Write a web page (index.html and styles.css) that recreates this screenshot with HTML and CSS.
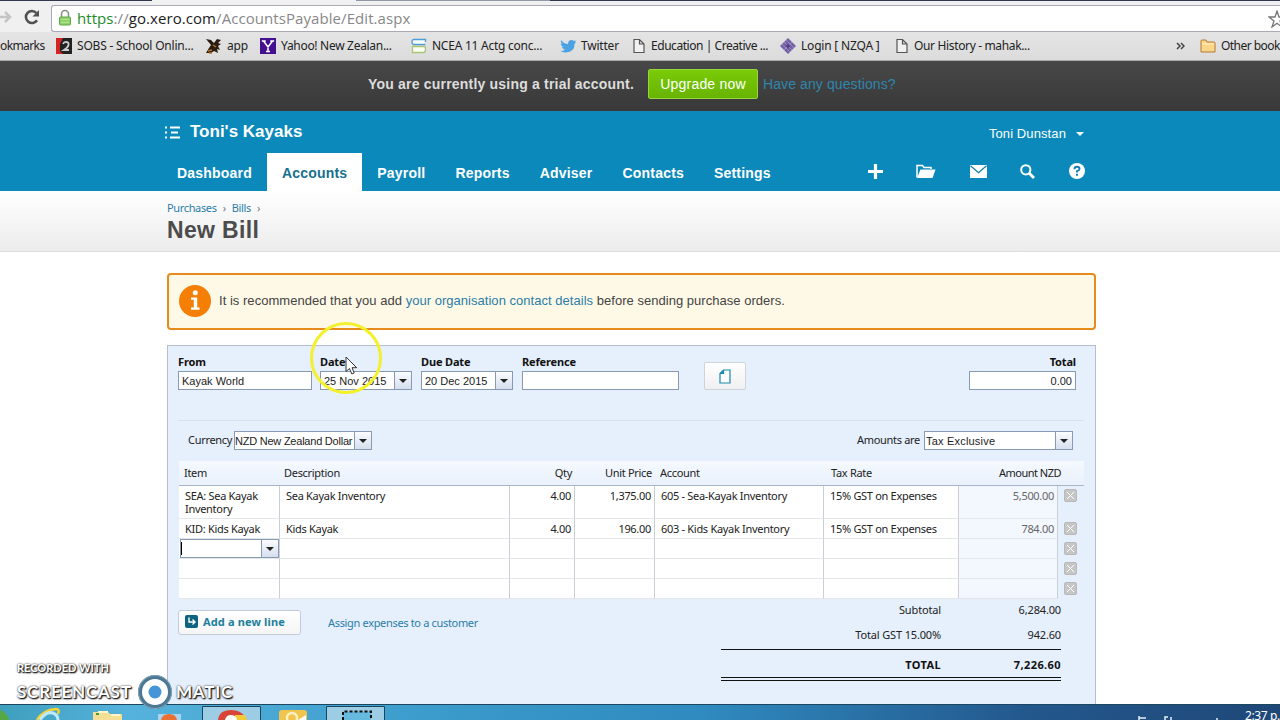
FILE: index.html
```html
<!DOCTYPE html>
<html lang="en">
<head>
    <meta charset="UTF-8">
    <meta name="viewport" content="width=device-width, initial-scale=1.0">
    <title>New Bill</title>
    <link rel="stylesheet" href="styles.css">
</head>
<body>

    <!-- Browser -->
    <div class="tab-strip"><span class="tab"></span><span class="new-tab"></span></div>
    <div class="toolbar">
        <svg class="forward" width="14" height="20" viewBox="0 0 14 20"><path d="M-2 10H8M5 5l5 5-5 5" fill="none" stroke="#c4c4c4" stroke-width="2.500"/></svg>
        <svg class="reload" width="18" height="18" viewBox="0 0 18 18"><path d="M14 12.200A6 6 0 1 1 13.400 5" fill="none" stroke="#505050" stroke-width="2.600"/><path d="M16 2v6.500H9.500z" fill="#505050"/></svg>
        <div class="omnibox">
            <svg width="14" height="18" viewBox="0 0 14 18"><path d="M3.500 9V5a3.500 3.500 0 0 1 7 0v4" fill="none" stroke="#8a9285" stroke-width="1.600"/><rect x="1.500" y="8" width="11" height="8" rx="1" fill="#8fd26a" stroke="#5fa947"/><path d="M3 10.500h8M3 13.500h8" stroke="#b3e496"/></svg>
            <span class="url"><span class="secure">https</span>://<span class="host">go.xero.com</span>/AccountsPayable/Edit.aspx</span>
        </div>
        <svg class="star" width="18" height="18" viewBox="0 0 18 18"><path d="M9 1l2 6h6l-5 4 2 6-5-3.700L4 17l2-6-5-4h6z" fill="#fff" stroke="#777" stroke-width="1.300"/></svg>
    </div>
    <div class="bookmarks">
        <span class="bm bm-first">okmarks</span>
        <svg class="i-sobs" width="16" height="16" viewBox="0 0 16 16"><path d="M0 0h16v16H0z" fill="#222"/><path d="M0 0h7L4 6v7l3 3H0z" fill="#d32424"/><path d="M7 6q1-2.500 3.500-2T12.500 7 8 12h5" fill="none" stroke="#ccc" stroke-width="1.800"/></svg>
        <span class="bm bm-sobs">SOBS - School Onlin...</span>
        <svg class="i-app" width="16" height="16" viewBox="0 0 16 16"><path d="M0 1l5 1 3 3 3-4 4 1-3 3 3 1-3 2 2 4-3-1 1 4-4-2-3 2H0l3-5 2-3z" fill="#2b1c12"/><path d="M7 7l3 2M2 13l4-1M3 15h3" stroke="#b77325" stroke-width="1.500"/></svg>
        <span class="bm bm-app">app</span>
        <svg class="i-yahoo" width="16" height="16" viewBox="0 0 16 16"><path d="M0 0h16v16H0z" fill="#45108f"/><path d="M3.500 3L8 9l4.500-6M8 8v6M1.800 3h4M10.200 3h4M6 13.500h4" fill="none" stroke="#fff" stroke-width="1.500"/></svg>
        <span class="bm bm-yahoo">Yahoo! New Zealan...</span>
        <svg class="i-ncea" width="16" height="16" viewBox="0 0 16 16"><path d="M14.500 4V1.500H3q-2 0-2 2.500t2 2.500h11.500" fill="#fff" stroke="#4e9bd5" stroke-width="1.300"/><path d="M1 8.500h12q1.500 0 1.500 2.800T13 14.500H1.500V9" fill="#fbfcf4" stroke="#a9c576" stroke-width="1.300"/></svg>
        <span class="bm bm-ncea">NCEA 11 Actg conc...</span>
        <svg class="i-twitter" width="16" height="16" viewBox="0 0 16 16"><path d="M1 2q3 4 7 4 0-4 3.500-4 1.500 0 2.500 1l2-.5-1 2 1-.2-1.500 1.700Q14.500 14 6 14.500q-3 0-5.500-1.500 3 0 4.500-1.500-2.500-.5-3-2.500h1.500Q.8 8 .8 5.500l1.500.5Q0 4 1 2z" fill="#4ba3e3"/></svg>
        <span class="bm bm-twitter">Twitter</span>
        <svg class="i-page" width="12" height="16" viewBox="0 0 12 16"><path d="M1 1.500h5.500L11 6v8.500H1zM6.500 1.500V6H11" fill="#f0f0f0" stroke="#555" stroke-width="1.200"/></svg>
        <span class="bm bm-edu">Education | Creative ...</span>
        <svg class="i-nzqa" width="16" height="16" viewBox="0 0 16 16"><path d="M8 0l8 8-8 8-8-8z" fill="#7461a6"/><path d="M4 4l8 8M12 4l-8 8M6 2l8 8M2 6l8 8" stroke="#a496c4" stroke-width=".8"/><path d="M8 5.500L10.500 8 8 10.500 5.500 8z" fill="#57418b"/></svg>
        <span class="bm bm-nzqa">Login [ NZQA ]</span>
        <svg class="i-page" width="12" height="16" viewBox="0 0 12 16"><path d="M1 1.500h5.500L11 6v8.500H1zM6.500 1.500V6H11" fill="#f0f0f0" stroke="#555" stroke-width="1.200"/></svg>
        <span class="bm bm-history">Our History - mahak...</span>
        <svg class="more" width="9" height="8" viewBox="0 0 9 8"><path d="M1 1l3 3-3 3M5 1l3 3-3 3" fill="none" stroke="#444" stroke-width="1.500"/></svg>
        <svg class="i-folder" width="16" height="14" viewBox="0 0 16 14"><path d="M1 13V2q0-1 1-1h4l1 2h7q1 0 1 1v9z" fill="#fbd58a" stroke="#b67b35"/><path d="M2 5h12" stroke="#fff0c0"/></svg>
        <span class="bm bm-other">Other book</span>
    </div>

    <!-- Trial bar -->
    <div class="trial">
        <strong>You are currently using a trial account.</strong>
        <a class="upgrade" href="#">Upgrade now</a>
        <a class="questions" href="#">Have any questions?</a>
    </div>

    <!-- Header -->
    <header>
        <div class="org-row">
            <svg width="15" height="13" viewBox="0 0 15 13"><path d="M0 1.500h2M5 1.500h10M0 6.500h2M6 6.500h7M0 11.500h2M5 11.500h10" stroke="#fff" stroke-width="1.800"/></svg>
            <span class="org">Toni's Kayaks</span>
            <span class="user">Toni Dunstan</span>
            <span class="user-caret"></span>
        </div>
        <nav>
            <a href="#">Dashboard</a>
            <a class="active" href="#">Accounts</a>
            <a href="#">Payroll</a>
            <a href="#">Reports</a>
            <a href="#">Adviser</a>
            <a href="#">Contacts</a>
            <a href="#">Settings</a>
            <div class="nav-icons">
                <svg width="15" height="15" viewBox="0 0 15 15"><path d="M7.500 0v15M0 7.500h15" stroke="#fff" stroke-width="3.200"/></svg>
                <svg width="20" height="15" viewBox="0 0 20 15"><path d="M1 13.500V1.500h5.500l1.500 2h7V5" fill="none" stroke="#fff" stroke-width="1.500"/><path d="M4.500 5.500H19.500l-3 8.500H1z" fill="#fff"/></svg>
                <svg width="17" height="13" viewBox="0 0 17 13"><path d="M0 0h17v13H0z" fill="#fff"/><path d="M.5 .8l8 7 8-7" fill="none" stroke="#0d7eae" stroke-width="1.200"/></svg>
                <svg width="15" height="15" viewBox="0 0 15 15"><circle cx="5.800" cy="5.800" r="4.600" fill="none" stroke="#fff" stroke-width="2"/><path d="M9 9l5 5" stroke="#fff" stroke-width="2.800"/></svg>
                <svg width="16" height="16" viewBox="0 0 16 16"><circle cx="8" cy="8" r="8" fill="#fff"/><path d="M5.500 6.200q0-2.400 2.500-2.400t2.500 2.100Q10.500 7.300 8 8.200v1.200M8 10.700v2" fill="none" stroke="#0d7eae" stroke-width="1.900"/></svg>
            </div>
        </nav>
    </header>

    <!-- Page title -->
    <div class="title-band">
        <div class="crumbs"><a href="#">Purchases</a><i>›</i><a href="#">Bills</a><i>›</i></div>
        <h1>New Bill</h1>
    </div>

    <main>
        <div class="notice">
            <svg width="32" height="32" viewBox="0 0 32 32"><circle cx="16" cy="16" r="16" fill="#f57f05"/><circle cx="16.300" cy="7.700" r="2.500" fill="#fff"/><path d="M12 12.500h6.200V22.500H20.500v2.200H12v-2.200h2.800v-7.800H12z" fill="#fff"/></svg>
            <p>It is recommended that you add <a href="#">your organisation contact details</a> before sending purchase orders.</p>
        </div>

        <!-- Bill form -->
        <div class="bill">
            <div class="fields">
                <div class="field from"><label>From</label><div class="input">Kayak World</div></div>
                <div class="field date"><label>Date</label><div class="input">25 Nov 2015<b class="drop"></b></div></div>
                <div class="field due"><label>Due Date</label><div class="input">20 Dec 2015<b class="drop"></b></div></div>
                <div class="field reference"><label>Reference</label><div class="input"></div></div>
                <button class="attach"><svg width="12" height="15" viewBox="0 0 12 15"><path d="M4.500 1H11v13H1V4.500zM4.500 1v3.500H1" fill="#fff" stroke="#168aac" stroke-width="1.200"/><path d="M4.500 1v3.500H1z" fill="#168aac"/></svg></button>
                <div class="field total"><label>Total</label><div class="input">0.00</div></div>
            </div>

            <div class="options">
                <span class="opt-currency">Currency</span>
                <div class="input currency">NZD New Zealand Dollar<b class="drop"></b></div>
                <span class="opt-amounts">Amounts are</span>
                <div class="input amounts">Tax Exclusive<b class="drop"></b></div>
            </div>

            <table>
                <colgroup><col class="c-item"><col class="c-desc"><col class="c-qty"><col class="c-price"><col class="c-account"><col class="c-tax"><col class="c-amount"><col class="c-del"></colgroup>
                <thead>
                    <tr>
                        <th>Item</th>
                        <th class="th-desc">Description</th>
                        <th class="num">Qty</th>
                        <th class="num">Unit Price</th>
                        <th>Account</th>
                        <th class="th-tax">Tax Rate</th>
                        <th class="num th-amount" colspan="2">Amount NZD</th>
                    </tr>
                </thead>
                <tbody>
                    <tr class="tall">
                        <td>SEA: Sea Kayak Inventory</td>
                        <td>Sea Kayak Inventory</td>
                        <td class="num">4.00</td>
                        <td class="num">1,375.00</td>
                        <td>605 - Sea-Kayak Inventory</td>
                        <td>15% GST on Expenses</td>
                        <td class="num amount">5,500.00</td>
                        <td class="del"><span></span></td>
                    </tr>
                    <tr>
                        <td>KID: Kids Kayak</td>
                        <td>Kids Kayak</td>
                        <td class="num">4.00</td>
                        <td class="num">196.00</td>
                        <td>603 - Kids Kayak Inventory</td>
                        <td>15% GST on Expenses</td>
                        <td class="num amount">784.00</td>
                        <td class="del"><span></span></td>
                    </tr>
                    <tr>
                        <td class="editing"><div class="input"><b class="drop"></b></div></td>
                        <td></td><td></td><td></td><td></td><td></td><td class="amount"></td>
                        <td class="del"><span></span></td>
                    </tr>
                    <tr>
                        <td></td><td></td><td></td><td></td><td></td><td></td><td class="amount"></td>
                        <td class="del"><span></span></td>
                    </tr>
                    <tr>
                        <td></td><td></td><td></td><td></td><td></td><td></td><td class="amount"></td>
                        <td class="del"><span></span></td>
                    </tr>
                </tbody>
            </table>

            <div class="bill-footer">
                <button class="add-line">
                    <svg width="13" height="13" viewBox="0 0 13 13"><rect width="13" height="13" rx="2" fill="#0e637e"/><path d="M4 2.500v4.500h6M7.500 4.500L10 7 7.500 9.500" fill="none" stroke="#fff" stroke-width="1.400"/></svg>
                    Add a new line
                </button>
                <a class="assign" href="#">Assign expenses to a customer</a>
                <div class="totals">
                    <div class="sum"><span>Subtotal</span><span>6,284.00</span></div>
                    <div class="sum"><span>Total GST 15.00%</span><span>942.60</span></div>
                    <div class="sum grand"><span>TOTAL</span><span>7,226.60</span></div>
                </div>
            </div>
        </div>
    </main>

    <!-- Windows taskbar -->
    <div class="taskbar">
        <svg width="400" height="15" viewBox="0 0 400 15">
            <path d="M0 5q8 3 9 10H0z" fill="#55a844"/>
            <path d="M37 15Q43 5 56 4q4 0 2 5" fill="none" stroke="#f3d232" stroke-width="2.500"/><path d="M40 15q6-9 13-7 5 2 5 7" fill="none" stroke="#bdeafa" stroke-width="3"/>
            <path d="M93 15V7h15l2 2h12v6z" fill="#f5df95"/><path d="M98 7h10M111 10h9" stroke="#fff6cb" stroke-width="2"/><path d="M96 9h3" stroke="#3d9b3d" stroke-width="2"/>
            <rect x="158" y="9" width="23" height="6" fill="#a9d3ee"/><path d="M161 15q1-6 8-6t8 6z" fill="#ea7132"/>
            <path class="task" d="M202.500 15V1.500h58V15"/>
            <path d="M218 15Q219 5 231 5q10 0 14 7H231q-5 0-6 3z" fill="#d94436"/><path d="M235 10h10l2 5H235z" fill="#f3ca3a"/><path d="M225 15q1-5 6-5t6 5z" fill="#fff"/>
            <rect x="279" y="5" width="28" height="12" rx="3" fill="#f1c44d"/><circle cx="292" cy="13" r="5" fill="none" stroke="#fff2bc" stroke-width="2.500"/><path d="M298 15l8-5v5z" fill="#fff"/>
            <path class="task" d="M326.500 15V1.500h58V15"/>
            <path d="M343 15V6.500h28V15" fill="#66b9df" stroke="#111" stroke-width="2" stroke-dasharray="3 2"/>
        </svg>
        <svg class="tray" width="80" height="4" viewBox="0 0 80 4"><path d="M1 0v4M1 2h7M27 4V1h3M33 1v3M79 2v2" fill="none" stroke="#e8f1f8" stroke-width="1.500"/></svg>
        <span class="clock">2:37 p.</span>
    </div>

    <!-- Recorder overlays -->
    <div class="click-ring"></div>
    <svg class="cursor" width="13" height="20" viewBox="0 0 13 20"><path d="M1 1v14.500l3.500-3 2.300 5.500 2.400-1L7 11.700h4.700z" fill="#fff" stroke="#333"/></svg>
    <div class="watermark">
        <div class="wm-small">RECORDED WITH</div>
        <div class="wm-big"><span class="wm-left">SCREENCAST</span>
            <svg width="36" height="36" viewBox="0 0 36 36"><circle cx="18" cy="18" r="15" fill="#fff" stroke="#4c7894" stroke-width="4"/><circle cx="18" cy="18" r="16.500" fill="none" stroke="#83a5b9"/><circle cx="18" cy="18" r="6.500" fill="#4695d6"/></svg>
            <span class="wm-right">MATIC</span></div>
    </div>

</body>
</html>
```
FILE: styles.css
```css
* {
    box-sizing: border-box;
}
body {
    margin: 0;
    height: 720px;
    display: flex;
    flex-direction: column;
    position: relative;
    overflow: hidden;
    background: #fff;
    color: #222;
    font-family: "Noto Sans", sans-serif;
    font-size: 11px;
    letter-spacing: -0.3px;
}
body > * {
    flex-shrink: 0;
}
a {
    color: #2b7da8;
    text-decoration: none;
}
svg {
    display: block;
    flex-shrink: 0;
}
button {
    font-family: inherit;
    margin: 0;
}

/* Browser */
.tab-strip {
    height: 1px;
    background: #30394b;
    display: flex;
}
.tab {
    width: 204px;
    margin-left: 152px;
    background: #f4f4f4;
}
.new-tab {
    width: 194px;
    background: #9298a5;
}
.toolbar {
    height: 31px;
    background: #f0f0f0;
    display: flex;
    align-items: center;
    position: relative;
    overflow: hidden;
}
.reload {
    margin-left: 9px;
}
.omnibox {
    flex: 1;
    height: 27px;
    margin: 3px 0 0 10px;
    padding-left: 6px;
    border: 1px solid #aaa9b5;
    border-right: 0;
    border-radius: 3px 0 0 3px;
    background: #fff;
    display: flex;
    align-items: center;
}
.url {
    margin-left: 5px;
    font-family: "Open Sans", sans-serif;
    font-size: 15px;
    letter-spacing: 0.07px;
    color: #888;
    white-space: nowrap;
}
.secure {
    color: #218c2b;
}
.host {
    color: #222;
}
.star {
    position: absolute;
    left: 1268px;
    top: 9px;
}
.bookmarks {
    height: 29px;
    background: linear-gradient(#e4e4e4, #dcdcdc);
    border-bottom: 1px solid #aaa;
    display: flex;
    align-items: center;
    overflow: hidden;
    padding-bottom: 1px;
    font-size: 12px;
    white-space: nowrap;
}
.bm {
    flex-shrink: 0;
    margin-left: 5px;
    letter-spacing: -0.2px;
}
.bm-first {
    width: 56px;
    margin-left: 0;
    letter-spacing: -0.6px;
}
.bm-sobs {
    width: 129px;
}
.bm-app {
    width: 33px;
}
.bm-yahoo {
    width: 130px;
    letter-spacing: -0.3px;
}
.bm-ncea {
    width: 128px;
    letter-spacing: -0.25px;
}
.bm-twitter {
    width: 52px;
}
.bm-edu {
    width: 129px;
    margin-left: 6px;
    letter-spacing: -0.45px;
}
.bm-nzqa {
    width: 95px;
    letter-spacing: -0.2px;
}
.bm-history {
    width: 262px;
    margin-left: 6px;
    letter-spacing: -0.35px;
}
.i-folder {
    margin-left: 15px;
}
.bm-other {
    letter-spacing: -0.55px;
}

/* Trial bar */
.trial {
    height: 50px;
    background: linear-gradient(#484848, #383838);
    display: flex;
    align-items: center;
    padding: 0 0 4px 368px;
    font-family: "Liberation Sans", Arial, sans-serif;
    font-size: 14px;
    color: #ddd;
}
.trial strong {
    width: 280px;
    letter-spacing: 0.2px;
}
.upgrade {
    width: 110px;
    height: 30px;
    line-height: 28px;
    border: 1px solid #96d63d;
    border-radius: 2px;
    background: linear-gradient(#7acb0a, #68b300);
    color: #fff;
    text-align: center;
    letter-spacing: 0.2px;
}
.questions {
    margin-left: 5px;
    letter-spacing: 0.1px;
    color: #2f86ad;
}

/* Header */
header {
    height: 80px;
    background: #0a89ba;
    font-family: "Liberation Sans", Arial, sans-serif;
    color: #fff;
    letter-spacing: 0;
}
.org-row {
    height: 42px;
    width: 919px;
    margin-left: 165px;
    display: flex;
    align-items: center;
}
.org {
    margin-left: 10px;
    font-size: 17px;
    font-weight: bold;
}
.user {
    margin: 3px 0 0 auto;
    font-size: 13px;
    letter-spacing: 0.1px;
}
.user-caret {
    margin: 4px 0 0 10px;
    border: 4px solid transparent;
    border-top-color: #fff;
    border-bottom: 0;
}
nav {
    display: flex;
    margin-left: 162px;
    width: 923px;
}
nav a {
    height: 38px;
    line-height: 40px;
    padding: 0 15px;
    color: #fff;
    font-size: 14px;
    font-weight: bold;
    letter-spacing: 0.2px;
}
nav .active {
    background: #fff;
    color: #17708f;
}
.nav-icons {
    flex: 1;
    padding-bottom: 2px;
    display: flex;
    justify-content: space-between;
    align-items: center;
    margin-left: 82px;
}

/* Page title */
.title-band {
    height: 61px;
    background: linear-gradient(#fff, #ececec);
    border-bottom: 1px solid #ddd;
    padding: 9px 0 0 167px;
}
.crumbs {
    line-height: 16px;
    letter-spacing: -0.35px;
}
.crumbs i {
    font-style: normal;
    color: #777;
    margin: 0 6px;
}
h1 {
    margin: 0;
    font: bold 23px/28px "Liberation Sans", Arial, sans-serif;
    letter-spacing: 0.35px;
    color: #4c4c4c;
}

main {
    width: 929px;
    height: 452px;
    margin-left: 167px;
    padding-top: 21px;
    overflow: hidden;
}
.notice {
    height: 57px;
    border: 2px solid #e58c1d;
    border-radius: 4px;
    background: #fef9e6;
    display: flex;
    align-items: center;
    padding: 0 10px 2px;
    font: 13px "Liberation Sans", Arial, sans-serif;
    color: #444;
}
.notice p {
    margin: 0 0 0 8px;
    letter-spacing: 0.03px;
}

/* Bill form */
.bill {
    height: 381px;
    margin-top: 15px;
    border: 1px solid #b8bdcc;
    background: #e6effc;
    padding: 8px 11px 0 10px;
}
.fields {
    display: flex;
    height: 67px;
    border-bottom: 1px solid #d9e2e8;
}
.field label {
    display: block;
    height: 17px;
    line-height: 16px;
    font-weight: bold;
    letter-spacing: -0.15px;
    color: #111;
}
.input {
    height: 19px;
    border: 1px solid #8799b3;
    background: #fff;
    padding-left: 3px;
    display: flex;
    font: 11px/18px "Liberation Sans", Arial, sans-serif;
    letter-spacing: 0;
    white-space: nowrap;
}
.drop {
    width: 17px;
    margin-left: auto;
    flex-shrink: 0;
    border-left: 1px solid #8799b3;
    background: linear-gradient(#fafcff, #d5dfed);
    display: flex;
    align-items: center;
    justify-content: center;
}
.drop::after {
    content: "";
    border: 4px solid transparent;
    border-top-color: #222;
    border-bottom: 0;
}
.from {
    width: 134px;
}
.date {
    width: 92px;
    margin-left: 8px;
}
.due {
    width: 92px;
    margin-left: 9px;
}
.reference {
    width: 157px;
    margin-left: 9px;
}
.attach {
    width: 42px;
    height: 28px;
    margin: 8px 0 0 25px;
    border: 1px solid #cfd3da;
    border-radius: 2px;
    background: linear-gradient(#fff, #f0f0f2);
    display: flex;
    align-items: center;
    justify-content: center;
}
.total {
    width: 107px;
    margin-left: auto;
    margin-right: 8px;
    text-align: right;
}
.total .input {
    justify-content: flex-end;
    padding-right: 3px;
}
.options {
    display: flex;
    height: 40px;
    padding: 10px 11px 0 10px;
    line-height: 18px;
}
.opt-currency {
    width: 46px;
}
.options .input {
    padding-left: 1px;
}
.options .currency {
    width: 138px;
    padding-left: 0;
    letter-spacing: -0.23px;
}
.opt-amounts {
    margin-left: auto;
    margin-right: 4px;
}
.options .amounts {
    width: 149px;
    letter-spacing: 0.2px;
}
table {
    width: 905px;
    margin-left: 1px;
    table-layout: fixed;
    border-collapse: separate;
    border-spacing: 0;
}
.c-item {
    width: 101px;
}
.c-desc {
    width: 230px;
}
.c-qty {
    width: 65px;
}
.c-price {
    width: 80px;
}
.c-account {
    width: 169px;
}
.c-tax {
    width: 135px;
}
.c-amount {
    width: 99px;
}
th {
    height: 25px;
    padding: 0 4px 2px 5px;
    border-bottom: 1px solid #a8b4c8;
    background: linear-gradient(#f5f9ff, #e9f1fc);
    font-weight: normal;
    text-align: left;
    white-space: nowrap;
    letter-spacing: -0.3px;
}
.th-desc {
    padding-left: 4px;
}
.th-tax {
    padding-left: 7px;
}
td {
    height: 20px;
    padding: 3px 4px 0 6px;
    border-right: 1px solid #cbced6;
    border-bottom: 1px solid #e4e7ea;
    background: #fff;
    line-height: 13px;
    vertical-align: top;
}
.tall td {
    height: 33px;
}
.num {
    text-align: right;
    padding-right: 3px;
}
th.th-amount {
    padding-right: 23px;
    letter-spacing: -0.5px;
}
.amount {
    background: #f3f7fe;
    color: #666;
}
.del {
    border: 0;
    background: none;
    padding: 3px 0 0 6px;
}
.del span {
    display: block;
    width: 13px;
    height: 13px;
    border-radius: 2px;
    border: 1px solid #b9b9b9;
    background: linear-gradient(45deg, transparent 45%, #fff 45%, #fff 55%, transparent 55%) center / 7px 7px no-repeat, linear-gradient(-45deg, transparent 45%, #fff 45%, #fff 55%, transparent 55%) center / 7px 7px no-repeat, #c6c6c6;
}
td.editing {
    padding: 0 0 0 1px;
}
.editing .input::before {
    content: "";
    width: 1px;
    height: 13px;
    margin: 2px 0 0 -3px;
    background: #000;
}
.bill-footer {
    display: flex;
    align-items: flex-start;
}
.add-line {
    width: 123px;
    height: 25px;
    margin: 11px 0 0 0;
    padding: 0 0 2px 6px;
    border: 1px solid #c3cbd6;
    border-radius: 3px;
    background: linear-gradient(#fff, #f5f5f6);
    color: #1b7f9d;
    font-size: 11px;
    font-weight: bold;
    letter-spacing: 0.15px;
    white-space: nowrap;
    display: flex;
    align-items: center;
    gap: 5px;
}
.assign {
    margin: 16px 0 0 27px;
    letter-spacing: -0.33px;
}
.totals {
    width: 340px;
    margin: 0 23px 0 auto;
}
.sum {
    height: 25px;
    line-height: 22px;
    display: flex;
    justify-content: flex-end;
    letter-spacing: -0.15px;
}
.sum span:last-child {
    width: 120px;
    text-align: right;
}
.grand {
    height: 32px;
    border-top: 1px solid #111;
    border-bottom: 4px double #111;
    line-height: 30px;
    font-weight: bold;
    letter-spacing: 0.4px;
    color: #111;
}

/* Windows taskbar */
.taskbar {
    height: 16px;
    border-top: 1px solid #1d465f;
    background: linear-gradient(90deg, #3f9fbd, #55b2dc 10%, #3c9ccb 33%, #2f8abf 55%, #23588d 80%, #1f4778);
    display: flex;
    overflow: hidden;
}
.task {
    fill: #9dcce5;
    stroke: #16475f;
}
.tray {
    margin: 11px 0 0 738px;
}
.clock {
    flex-shrink: 0;
    margin: 4px 0 0 27px;
    color: #fff;
    font-size: 12px;
    line-height: 14px;
    letter-spacing: -0.4px;
    white-space: nowrap;
}

/* Recorder overlays */
.click-ring {
    position: absolute;
    left: 310px;
    top: 322px;
    width: 72px;
    height: 72px;
    border: 3px solid #f4f02b;
    border-radius: 50%;
}
.cursor {
    position: absolute;
    left: 345px;
    top: 356px;
}
.watermark {
    position: absolute;
    left: 17px;
    top: 661px;
    color: #fff;
    font-family: Lato, sans-serif;
    font-weight: bold;
    text-shadow: 1px 1px 1px #222, 0 0 2px #222, 1px 1px 2px #444;
}
.wm-small {
    font-size: 11px;
    line-height: 14px;
    letter-spacing: 0;
}
.wm-big {
    display: flex;
    align-items: center;
    height: 34px;
    font-size: 17px;
    line-height: 20px;
    letter-spacing: 0.8px;
}
.wm-left {
    width: 120px;
}
.wm-right {
    margin-left: 3px;
}
```
